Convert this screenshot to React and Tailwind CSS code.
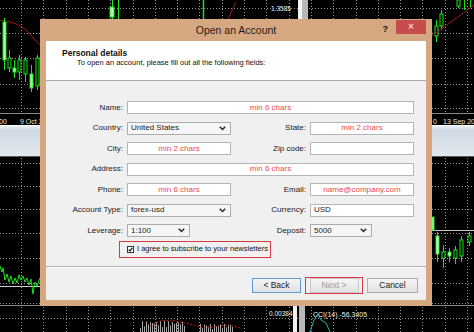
import React from "react";

const F = { fontFamily: '"Liberation Sans", Arial, sans-serif' };

const Chart = () => {
  const vx = [];
  for (let x = 21; x < 474; x += 22.3) vx.push(Math.round(x));
  const topH = [8, 33, 58, 84, 108];
  const midH = [163, 186, 209, 233, 258, 283];
  const botH = [318];
  const dot = { stroke: "#9a9a9a", strokeWidth: 1, strokeDasharray: "1 2" };
  return (
    <svg className="absolute inset-0" width="474" height="332" viewBox="0 0 474 332">
      <rect width="474" height="332" fill="#000" />
      {vx.map((x) => (
        <g key={x}>
          <line x1={x + 0.5} y1="0" x2={x + 0.5} y2="113" style={dot} />
          <line x1={x + 0.5} y1="158" x2={x + 0.5} y2="304" style={dot} />
          <line x1={x + 0.5} y1="307" x2={x + 0.5} y2="332" style={dot} />
        </g>
      ))}
      {[...topH, ...midH, ...botH, 303].map((y) => (
        <line key={y} x1="0" y1={y + 0.5} x2="474" y2={y + 0.5} style={dot} />
      ))}
      {/* top-left candles */}
      <path d="M0 20 Q20 22 30 34 T45 48" fill="none" stroke="#a01818" strokeWidth="1" />
      <g stroke="#19e619" strokeWidth="1">
        <line x1="4.5" y1="18" x2="4.5" y2="70" />
        <rect x="3" y="22" width="3" height="38" fill="#b8ffb0" />
        <line x1="9.5" y1="50" x2="9.5" y2="72" />
        <rect x="8" y="58" width="3" height="10" fill="#000" />
        <line x1="14.5" y1="60" x2="14.5" y2="78" />
        <rect x="13" y="68" width="3" height="4" fill="#b8ffb0" />
        <line x1="19.5" y1="55" x2="19.5" y2="80" />
        <rect x="18" y="60" width="3" height="12" fill="#000" />
        <line x1="25.5" y1="57" x2="25.5" y2="82" />
        <rect x="24" y="60" width="3" height="14" fill="#000" />
        <line x1="31.5" y1="65" x2="31.5" y2="92" />
        <rect x="30" y="74" width="3" height="14" fill="#b8ffb0" />
        <line x1="37.5" y1="55" x2="37.5" y2="90" />
        <rect x="36" y="58" width="3" height="28" fill="#000" />
        <line x1="112.5" y1="0" x2="112.5" y2="19" />
        <rect x="110" y="7" width="4" height="10" fill="#b8ffb0" />
        <line x1="118.5" y1="0" x2="118.5" y2="19" />
        <line x1="203.5" y1="0" x2="203.5" y2="19" strokeWidth="1.5" />
      </g>
      <line x1="228" y1="19" x2="236" y2="2" stroke="#a01818" />
      {/* top-right */}
      <g stroke="#19e619" strokeWidth="1">
        <line x1="436.5" y1="20" x2="436.5" y2="42" />
        <rect x="435" y="26" width="3" height="10" fill="#000" />
        <line x1="441.5" y1="10" x2="441.5" y2="30" />
        <rect x="440" y="14" width="3" height="12" fill="#000" />
        <line x1="458.5" y1="0" x2="458.5" y2="8" />
        <rect x="457" y="0" width="3" height="6" fill="#000" />
        <line x1="464.5" y1="0" x2="464.5" y2="10" />
        <line x1="470.5" y1="0" x2="470.5" y2="8" />
      </g>
      <line x1="432" y1="36" x2="474" y2="5" stroke="#a01818" />
      {/* time axis + window bar */}
      <line x1="0" y1="113.5" x2="474" y2="113.5" stroke="#8a8a8a" />
      <text x="-1" y="124" fill="#e8e8e8" fontSize="7" style={F}>00</text>
      <text x="20" y="124" fill="#e8e8e8" fontSize="7" style={F}>9 Oct 2</text>
      <text x="433" y="124" fill="#e8e8e8" fontSize="7" style={F}>0</text>
      <text x="443" y="124" fill="#e8e8e8" fontSize="7" style={F}>13 Sep 20</text>
      <defs>
        <linearGradient id="bar" x1="0" y1="0" x2="0" y2="1">
          <stop offset="0" stopColor="#f4f7fa" />
          <stop offset="0.15" stopColor="#cfd9e4" />
          <stop offset="1" stopColor="#e2e8ee" />
        </linearGradient>
      </defs>
      <rect x="0" y="125" width="474" height="31" fill="url(#bar)" />
      <line x1="0" y1="125.5" x2="474" y2="125.5" stroke="#ffffff" />
      <line x1="0" y1="156.5" x2="474" y2="156.5" stroke="#5a5a5a" />
      {/* mid-left noisy chart */}
      <line x1="0" y1="286.5" x2="40" y2="286.5" stroke="#d0d0d0" />
      <path
        d="M0 266 L2 272 L3 268 L5 280 L7 274 L9 282 L11 276 L13 284 L15 278 L17 283 L19 275 L21 280 L23 276 L25 282 L27 278 L29 285 L31 279 L33 294 L35 282 L37 286 L40 278"
        fill="none"
        stroke="#19e619"
        strokeWidth="1"
      />
      {/* mid-right candles */}
      <line x1="432" y1="230.5" x2="474" y2="230.5" stroke="#c8c8c8" />
      <g stroke="#19e619" strokeWidth="1">
        <rect x="432" y="217" width="2" height="13" fill="#e8ffe0" />
        <line x1="437.5" y1="232" x2="437.5" y2="262" />
        <rect x="436" y="236" width="3" height="18" fill="#e8ffe0" />
        <line x1="443.5" y1="245" x2="443.5" y2="268" />
        <rect x="442" y="252" width="3" height="6" fill="#000" />
        <line x1="449.5" y1="248" x2="449.5" y2="262" />
        <rect x="448" y="252" width="3" height="4" fill="#e8ffe0" />
        <line x1="455.5" y1="246" x2="455.5" y2="264" />
        <rect x="454" y="250" width="3" height="8" fill="#000" />
        <line x1="461.5" y1="236" x2="461.5" y2="262" />
        <rect x="460" y="240" width="3" height="16" fill="#000" />
        <line x1="469.5" y1="232" x2="469.5" y2="246" />
        <rect x="468" y="236" width="3" height="6" fill="#000" />
      </g>
      {/* bottom window */}
      <line x1="0" y1="305.5" x2="474" y2="305.5" stroke="#8a8a8a" />
      <g stroke="#a8a8a8" strokeWidth="1">
        {[140, 142, 144, 146, 148, 150, 152, 154, 156, 158, 160, 162, 164, 166, 168, 170, 172, 174, 176, 178, 180, 182, 184, 200, 202, 204, 206, 208, 210, 212, 214, 216, 218, 220, 222, 224, 226, 228, 230, 232].map((x, i) => (
          <line key={x} x1={x + 0.5} y1={332} x2={x + 0.5} y2={332 - (x < 190 ? 4 + Math.abs(Math.sin(i * 1.7)) * 7 : 3 + Math.abs(Math.sin(i * 1.3)) * 5)} />
        ))}
      </g>
      <path d="M150 326 L160 321 L172 320 L190 324 L205 328 L230 325 L240 328" fill="none" stroke="#c01818" strokeDasharray="2 1.5" />
      <text x="269" y="316" fill="#f0f0f0" fontSize="6.5" style={F}>0.00384</text>
      <rect x="293" y="306" width="4" height="26" fill="#f2f2f2" />
      <rect x="299" y="306" width="6" height="26" fill="#b8b8b8" />
      <rect x="298" y="0" width="4" height="19" fill="#f2f2f2" />
      <rect x="302" y="0" width="6" height="19" fill="#b8b8b8" />
      <text x="271" y="11" fill="#f0f0f0" fontSize="6.5" style={F}>1.3585</text>
      <text x="313" y="317" fill="#f0f0f0" fontSize="7" style={F}>CCI(14) -56.3405</text>
      <path d="M310 332 L314 320 L318 314 L321 320 L326 323 L330 332" fill="none" stroke="#20b2aa" />
    </svg>
  );
};

const Chevron = () => (
  <svg width="7" height="5" viewBox="0 0 7 5" className="shrink-0">
    <path d="M0.8 0.8 L3.5 3.6 L6.2 0.8" fill="none" stroke="#222" strokeWidth="1.4" />
  </svg>
);

const Label = ({ children, w }) => (
  <div className={`${w} shrink-0 pr-[4px] text-right text-[8px] text-[#1a1a1a]`}>{children}</div>
);

const Input = ({ w, text, red, left }) => (
  <div
    className={`${w} h-[13px] shrink-0 border border-[#b5b5b5] bg-white flex items-center text-[8px] px-[3px] ${
      left ? "justify-start" : "justify-center"
    } ${red ? "text-[#ec4a4a]" : "text-[#1a1a1a]"}`}
  >
    {text}
  </div>
);

const Select = ({ w, text }) => (
  <div className={`${w} h-[13px] shrink-0 border border-[#acacac] bg-[#f6f6f6] flex items-center justify-between pl-[3px] pr-[4px] text-[8px] text-[#1a1a1a]`}>
    <span>{text}</span>
    <Chevron />
  </div>
);

const Row = ({ children }) => <div className="flex items-center h-[13px]">{children}</div>;

const Btn = ({ children, cls }) => (
  <div className={`h-[15px] w-[49px] flex items-center justify-center text-[8.5px] bg-gradient-to-b from-[#f4f4f4] to-[#e2e2e2] ${cls}`}>
    {children}
  </div>
);

const Dialog = () => (
  <div className="absolute left-[40px] top-[19px] w-[392px] h-[287px] bg-[#d6a881] flex flex-col px-[6px] pb-[6px]" style={F}>
    <div className="h-[22px] flex items-start relative shrink-0">
      <div className="absolute left-0 right-0 top-[4px] text-center text-[10.5px] text-[#1c1c1c]">Open an Account</div>
      <div className="ml-auto flex items-start">
        <span className="mt-[4px] mr-[8px] text-[9px] font-bold text-[#111]">?</span>
        <div className="mt-[1px] w-[30px] h-[14px] bg-[#c74c4e] flex items-center justify-center text-white text-[10px] leading-none">×</div>
      </div>
    </div>
    <div className="flex-1 flex flex-col bg-[#f0f0f0]">
      <div className="h-[40px] bg-white border-b border-[#a9a9a9] pl-[16px] pt-[7px] shrink-0">
        <div className="text-[8.5px] font-bold text-[#111] leading-[10px]">Personal details</div>
        <div className="pl-[15px] text-[7.5px] text-[#111] leading-[10px]">
          To open an account, please fill out all the following fields:
        </div>
      </div>
      <div className="flex flex-col gap-[7.5px] pt-[20px] h-[186px] shrink-0 border-b border-[#b0b0b0]">
        <Row>
          <Label w="w-[81px]">Name:</Label>
          <Input w="w-[287px]" text="min 6 chars" red />
        </Row>
        <Row>
          <Label w="w-[81px]">Country:</Label>
          <Select w="w-[104px]" text="United States" />
          <Label w="w-[79px]">State:</Label>
          <Input w="w-[104px]" text="min 2 chars" red />
        </Row>
        <Row>
          <Label w="w-[81px]">City:</Label>
          <Input w="w-[104px]" text="min 2 chars" red />
          <Label w="w-[79px]">Zip code:</Label>
          <Input w="w-[104px]" text="" />
        </Row>
        <Row>
          <Label w="w-[81px]">Address:</Label>
          <Input w="w-[287px]" text="min 6 chars" red />
        </Row>
        <Row>
          <Label w="w-[81px]">Phone:</Label>
          <Input w="w-[104px]" text="min 6 chars" red />
          <Label w="w-[79px]">Email:</Label>
          <Input w="w-[104px]" text="name@company.com" red />
        </Row>
        <Row>
          <Label w="w-[81px]">Account Type:</Label>
          <Select w="w-[104px]" text="forex-usd" />
          <Label w="w-[79px]">Currency:</Label>
          <Input w="w-[104px]" text="USD" left />
        </Row>
        <Row>
          <Label w="w-[81px]">Leverage:</Label>
          <Select w="w-[63px]" text="1:100" />
          <Label w="w-[120px]">Deposit:</Label>
          <Select w="w-[62px]" text="5000" />
        </Row>
        <div className="pl-[73px] -mt-[4px]">
          <div className="w-[152px] h-[17px] border-[1.5px] border-[#d8393f] flex items-center pl-[7px] gap-[3px]">
            <div className="w-[7px] h-[7px] border border-[#333] bg-white flex items-center justify-center">
              <svg width="7" height="7" viewBox="0 0 7 7">
                <path d="M1 3.6 L2.8 5.4 L6 1.2" fill="none" stroke="#000" strokeWidth="1.5" />
              </svg>
            </div>
            <span className="text-[7.5px] text-[#111]">I agree to subscribe to your newsletters</span>
          </div>
        </div>
      </div>
      <div className="flex-1 border-t border-white flex items-center justify-end pr-[8px] gap-[4px] pt-[3px]">
        <Btn cls="border border-[#5e9ad8] text-[#222]">&lt; Back</Btn>
        <div className="w-[58px] h-[17px] border-[1.5px] border-[#d8393f] flex items-center justify-center">
          <Btn cls="border border-[#c8c8c8] text-[#9a9a9a]">Next &gt;</Btn>
        </div>
        <Btn cls="border border-[#adadad] text-[#222] w-[51px]">Cancel</Btn>
      </div>
    </div>
  </div>
);

export default function App() {
  return (
    <div className="relative w-[474px] h-[332px] overflow-hidden bg-black">
      <Chart />
      <Dialog />
    </div>
  );
}
